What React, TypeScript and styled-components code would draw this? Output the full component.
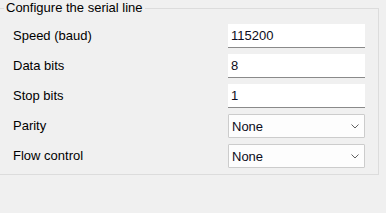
import React from 'react';
import styled, { createGlobalStyle } from 'styled-components';

const GlobalStyle = createGlobalStyle`
  html, body {
    margin: 0;
    padding: 0;
    background: #f0f0f0;
  }
  body {
    width: 386px;
    height: 213px;
    overflow: hidden;
    font-family: 'Liberation Sans', Arial, sans-serif;
    font-size: 13px;
    color: #000000;
  }
  * {
    box-sizing: border-box;
  }
`;

const GroupBox = styled.fieldset`
  margin: 0 0 0 -1px;
  width: 380px;
  padding: 8px 13px 6px 13px;
  border: 1px solid #dcdcdc;
  min-width: 0;
`;

const GroupTitle = styled.legend`
  margin-left: -9px;
  padding: 0 2px;
  line-height: 16px;
  color: #000000;
`;

const FieldGrid = styled.div`
  display: grid;
  grid-template-columns: 1fr 137px;
  row-gap: 6px;
  align-items: center;
`;

const FieldLabel = styled.label`
  line-height: 16px;
  color: #000000;
`;

const TextBox = styled.div`
  height: 24px;
  background: #ffffff;
  border-bottom: 1px solid #8a8a8a;
  padding: 0 3px;
  display: flex;
  align-items: center;
  color: #0c0c20;
`;

const ComboBox = styled.div`
  height: 24px;
  background: #fdfdfd;
  border: 1px solid #cccccc;
  border-radius: 1px;
  padding: 0 5px 0 3px;
  display: flex;
  align-items: center;
  justify-content: space-between;
  color: #0c0c20;
`;

const Chevron = () => (
  <svg width="8" height="5" viewBox="0 0 8 5">
    <polyline points="0.5,0.5 4,4 7.5,0.5" fill="none" stroke="#606060" strokeWidth="1" />
  </svg>
);

type Field = { label: string; value: string; combo?: boolean };

const fields: Field[] = [
  { label: 'Speed (baud)', value: '115200' },
  { label: 'Data bits', value: '8' },
  { label: 'Stop bits', value: '1' },
  { label: 'Parity', value: 'None', combo: true },
  { label: 'Flow control', value: 'None', combo: true },
];

export default function App() {
  return (
    <>
      <GlobalStyle />
      <GroupBox>
        <GroupTitle>Configure the serial line</GroupTitle>
        <FieldGrid>
          {fields.map((f) => (
            <React.Fragment key={f.label}>
              <FieldLabel>{f.label}</FieldLabel>
              {f.combo ? (
                <ComboBox>
                  <span>{f.value}</span>
                  <Chevron />
                </ComboBox>
              ) : (
                <TextBox>{f.value}</TextBox>
              )}
            </React.Fragment>
          ))}
        </FieldGrid>
      </GroupBox>
    </>
  );
}
